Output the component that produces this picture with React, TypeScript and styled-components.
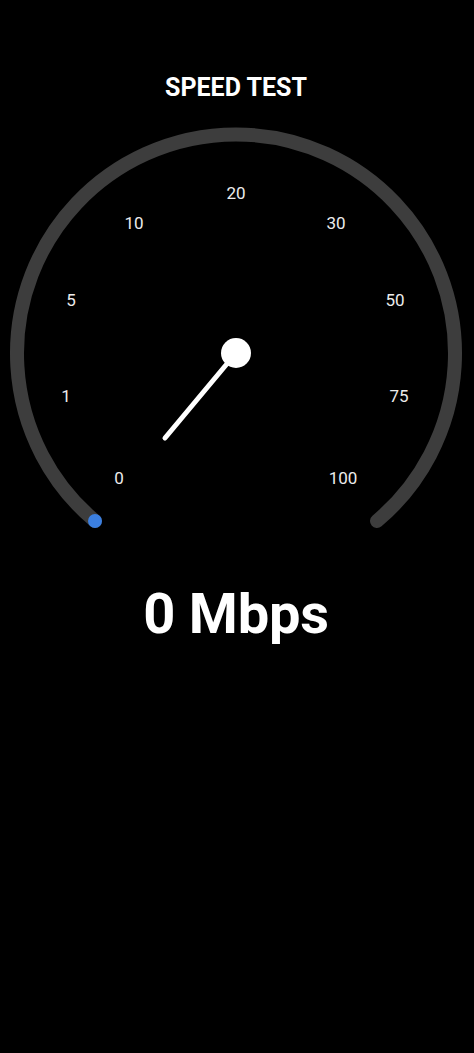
import React from "react";
import styled, { createGlobalStyle } from "styled-components";

const Global = createGlobalStyle`
  html, body { margin: 0; padding: 0; background: #000; }
  body { font-family: Roboto, "Liberation Sans", sans-serif; }
`;

const Page = styled.div`
  width: 474px;
  min-height: 1053px;
  background: #000;
  display: flex;
  flex-direction: column;
  align-items: center;
  padding-top: 73px;
  box-sizing: border-box;
`;

const Title = styled.h1`
  margin: 0;
  font-family: Roboto, "Liberation Sans", sans-serif;
  font-weight: 700;
  font-size: 25px;
  line-height: 30px;
  color: #fff;
  letter-spacing: 0;
  transform: translateX(-1px);
`;

const GaugeSvg = styled.svg`
  display: block;
  margin-top: 7px;
  width: 474px;
  height: 430px;
`;

const Label = styled.text`
  font-family: Roboto, "Liberation Sans", sans-serif;
  font-size: 17px;
  font-weight: 400;
  fill: #ececec;
`;

const Speed = styled.div`
  margin-top: 42px;
  font-family: Roboto, "Liberation Sans", sans-serif;
  font-weight: 700;
  font-size: 56px;
  line-height: 64px;
  color: #fff;
  letter-spacing: -0.2px;
  transform: translateX(-1px);
`;

const CX = 236;
const CY = 244;
const R = 219;

const labels: { t: string; x: number; y: number }[] = [
  { t: "20", x: 236, y: 193 },
  { t: "10", x: 134, y: 223 },
  { t: "30", x: 336, y: 223 },
  { t: "5", x: 71, y: 300 },
  { t: "50", x: 395, y: 300 },
  { t: "1", x: 66, y: 396 },
  { t: "75", x: 399, y: 396 },
  { t: "0", x: 119, y: 478 },
  { t: "100", x: 343, y: 478 },
];

export default function App() {
  const sx = CX - 141;
  const sy = CY + 167;
  const ex = CX + 141;
  const ey = CY + 167;
  const off = 110;
  return (
    <Page>
      <Global />
      <Title>SPEED TEST</Title>
      <GaugeSvg viewBox="0 0 474 430">
        <path
          d={`M ${sx} ${sy} A ${R} ${R} 0 1 1 ${ex} ${ey}`}
          fill="none"
          stroke="#3d3d3d"
          strokeWidth={14}
          strokeLinecap="round"
        />
        <circle cx={sx} cy={sy} r={7} fill="#3b7fe0" />
        {labels.map((l) => (
          <Label
            key={l.t}
            x={l.x}
            y={l.y - off}
            textAnchor="middle"
            dominantBaseline="central"
          >
            {l.t}
          </Label>
        ))}
        <line
          x1={CX}
          y1={CY - 1}
          x2={165}
          y2={438 - off}
          stroke="#fff"
          strokeWidth={5}
          strokeLinecap="round"
        />
        <circle cx={CX} cy={CY - 1} r={15} fill="#fff" />
      </GaugeSvg>
      <Speed>0 Mbps</Speed>
    </Page>
  );
}
